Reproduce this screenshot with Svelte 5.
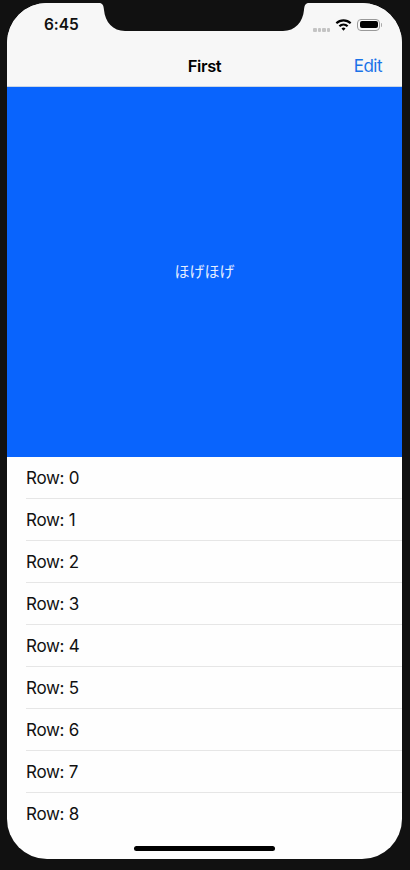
<script lang="ts">
  const rows = [0, 1, 2, 3, 4, 5, 6, 7, 8];
</script>

<div class="device">
  <div class="screen">
    <header class="top">
      <div class="status">
        <span class="time">6:45</span>
        <div class="indicators">
          <div class="signal">
            <i></i><i></i><i></i><i></i>
          </div>
          <svg class="wifi" width="17" height="13" viewBox="0 0 17 13" aria-hidden="true">
            <path d="M0.6 4.4a11.4 11.4 0 0 1 15.8 0l-1.5 1.6a9.2 9.2 0 0 0-12.8 0z" />
            <path d="M3.6 7.5a7.1 7.1 0 0 1 9.8 0l-1.6 1.6a4.8 4.8 0 0 0-6.6 0z" />
            <path d="M6.5 10.5a2.9 2.9 0 0 1 4 0l-2 2.2z" />
          </svg>
          <div class="battery"><span></span></div>
        </div>
      </div>
      <nav class="navbar">
        <span class="title">First</span>
        <button class="edit" type="button">Edit</button>
      </nav>
    </header>

    <section class="hero">ほげほげ</section>

    <ul class="list">
      {#each rows as row}
        <li><span>Row: {row}</span></li>
      {/each}
    </ul>

    <svg class="notch" width="210" height="28" viewBox="0 0 210 28" aria-hidden="true">
      <path d="M0 0H210C206.5 0 205.5 2 205 7C204 19 196 28 184 28H26C14 28 6 19 5 7C4.5 2 3.5 0 0 0Z" />
    </svg>
    <div class="home"></div>
  </div>
</div>

<style>
  :global(body) {
    background: #111;
  }

  .device {
    box-sizing: border-box;
    height: 870px;
    overflow: hidden;
    padding: 3px 8px 11px 7px;
    width: 410px;
    font-family: Inter, "Liberation Sans", "Noto Sans CJK JP", sans-serif;
  }

  .screen {
    background: #fefefe;
    border-radius: 40px;
    display: flex;
    flex-direction: column;
    height: 856px;
    overflow: hidden;
    position: relative;
  }

  .top {
    background: #f7f7f7;
    border-bottom: 1px solid #c9d6e6;
    flex: none;
    height: 83px;
  }

  .status {
    align-items: center;
    display: flex;
    height: 42px;
    justify-content: space-between;
    padding: 0 20px 0 37px;
  }

  .time {
    color: #111;
    font-size: 15.5px;
    font-weight: 600;
    letter-spacing: -0.1px;
  }

  .indicators {
    align-items: center;
    display: flex;
    gap: 5px;
  }

  .signal {
    display: flex;
    gap: 1px;
    margin-top: 11px;
  }

  .signal i {
    background: #c4c4c4;
    border-radius: 1px;
    height: 4px;
    width: 3.5px;
  }

  .wifi {
    fill: #000;
    margin-top: 1px;
  }

  .battery {
    border: 1px solid #999;
    border-radius: 4px;
    box-sizing: border-box;
    height: 12px;
    margin-right: 2px;
    margin-top: 1px;
    padding: 1.5px;
    position: relative;
    width: 23px;
  }

  .battery::after {
    background: #aaa;
    border-radius: 0 1px 1px 0;
    content: "";
    height: 4px;
    position: absolute;
    right: -3px;
    top: 3px;
    width: 1.5px;
  }

  .battery span {
    background: #000;
    border-radius: 2px;
    display: block;
    height: 100%;
  }

  .navbar {
    align-items: center;
    display: flex;
    height: 41px;
    justify-content: center;
    position: relative;
  }

  .title {
    color: #000;
    font-size: 16.5px;
    font-weight: 600;
    letter-spacing: -0.35px;
  }

  .edit {
    background: none;
    border: 0;
    color: #1a73e8;
    font: inherit;
    font-size: 17px;
    letter-spacing: -0.5px;
    padding: 0;
    position: absolute;
    right: 20px;
  }

  .hero {
    align-items: center;
    background: #0964fd;
    box-sizing: border-box;
    color: #e4eeff;
    display: flex;
    flex: none;
    font-size: 15px;
    height: 370px;
    justify-content: center;
    padding-bottom: 4px;
  }

  .list {
    list-style: none;
    margin: 0;
    padding: 0 0 0 19px;
  }

  .list li {
    align-items: center;
    border-bottom: 1px solid #e6e6e6;
    box-sizing: border-box;
    color: #111;
    display: flex;
    font-size: 17px;
    height: 42px;
    letter-spacing: -0.3px;
  }

  .list li:last-child {
    border-bottom: 0;
  }

  .notch {
    fill: #111;
    left: 92px;
    position: absolute;
    top: 0;
  }

  .home {
    background: #000;
    border-radius: 3px;
    bottom: 8px;
    height: 5px;
    left: 127px;
    position: absolute;
    width: 141px;
  }
</style>
